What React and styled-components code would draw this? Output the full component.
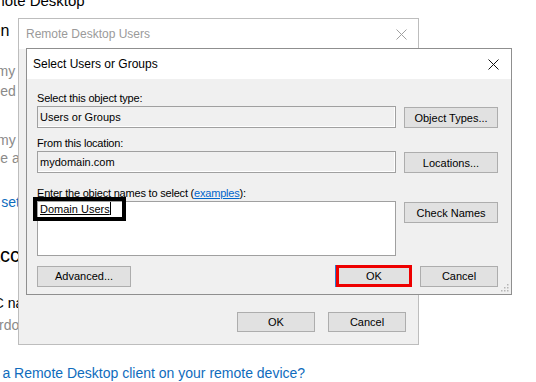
import { createGlobalStyle, styled } from "styled-components"

const GlobalStyle = createGlobalStyle`
  body {
    margin: 0;
    font-family: "Liberation Sans", Arial, sans-serif;
    background: #fff;
  }
`

const tones = { black: "#000", grey: "#8a8a8a", blue: "#0f6cbd" }

const Desktop = styled.div`
  position: relative;
  width: 536px;
  height: 382px;
  overflow: hidden;
  background: #fff;
`

const Page = styled.div`
  display: flex;
  flex-direction: column;
`

const Line = styled.div`
  height: ${(p) => p.$h || 20}px;
  line-height: ${(p) => p.$h || 20}px;
  margin-top: ${(p) => p.$mt}px;
  margin-left: ${(p) => p.$shift}px;
  font-size: ${(p) => p.$size || 14}px;
  color: ${(p) => tones[p.$tone || "black"]};
  white-space: nowrap;
`

const Window = styled.div`
  position: absolute;
  left: ${(p) => p.$x}px;
  top: ${(p) => p.$y}px;
  width: ${(p) => p.$w}px;
  height: ${(p) => p.$hgt}px;
  box-sizing: border-box;
  border: 1px solid ${(p) => (p.$active ? "#8f8f8f" : "#bdbdbd")};
  background: #f0f0f0;
  display: flex;
  flex-direction: column;
`

const TitleBar = styled.div`
  height: 30px;
  flex: none;
  background: #fff;
  display: flex;
  align-items: center;
  justify-content: space-between;
  padding: 0 ${(p) => p.$padR}px 0 ${(p) => p.$padL}px;
`

const Title = styled.span`
  font-size: 12px;
  color: ${(p) => (p.$active ? "#000" : "#9a9a9a")};
`

const CloseIcon = ({ color }) => (
  <svg width="11" height="11" viewBox="0 0 11 11">
    <path d="M0.5 0.5 L10.5 10.5 M10.5 0.5 L0.5 10.5" stroke={color} strokeWidth="1" fill="none" />
  </svg>
)

const BackBody = styled.div`
  flex: 1;
  display: flex;
  flex-direction: column;
  justify-content: flex-end;
  padding: 0 12px 12px;
`

const ButtonRow = styled.div`
  display: flex;
  justify-content: ${(p) => p.$justify || "flex-end"};
  align-items: center;
  gap: ${(p) => p.$gap || 8}px;
`

const Button = styled.button`
  box-sizing: border-box;
  width: ${(p) => p.$w || 94}px;
  height: ${(p) => p.$h || 21}px;
  margin: 0;
  padding: 0;
  border: 1px solid #adadad;
  background: #e1e1e1;
  font-family: "Liberation Sans", Arial, sans-serif;
  font-size: 11px;
  color: #000;
`

const OkButton = styled(Button)`
  border: 3px solid #ee0000;
  box-shadow: -1px 0 0 #2a7bd6;
`

const DialogBody = styled.div`
  flex: 1;
  padding: 12px 12px 0 10px;
  font-size: 11px;
`

const Label = styled.div`
  height: 14px;
  line-height: 14px;
  margin-top: ${(p) => p.$mt || 0}px;
  margin-bottom: 1px;
  letter-spacing: -0.2px;
  color: #000;
`

const Link = styled.span`
  color: #0066cc;
  text-decoration: underline;
`

const Row = styled.div`
  display: grid;
  grid-template-columns: 359px 94px;
  column-gap: 8px;
  align-items: start;

  & > button {
    margin-top: 1px;
  }
`

const TextBox = styled.div`
  position: relative;
  box-sizing: border-box;
  height: ${(p) => p.$h || 22}px;
  border: 1px solid #a0a0a0;
  box-shadow: inset -1px -1px 0 #fff;
  background: ${(p) => (p.$white ? "#fff" : "#f0f0f0")};
  padding: 0 2px;
  line-height: ${(p) => (p.$white ? "14px" : "20px")};
  font-size: 11px;
  color: #000;
`

const Typed = styled.span`
  text-decoration: underline;
`

const Caret = styled.span`
  display: inline-block;
  width: 1px;
  height: 13px;
  background: #000;
  vertical-align: -2px;
  margin-left: 0;
`

const Highlight = styled.div`
  position: absolute;
  left: -5px;
  top: -5px;
  width: 93px;
  height: 24px;
  box-sizing: border-box;
  border: 4px solid #000;
`

const Footer = styled.div`
  display: flex;
  justify-content: space-between;
  align-items: center;
  margin-top: 9px;
  padding-right: 1px;
`

const Grip = styled.svg`
  position: absolute;
  right: 2px;
  bottom: 2px;
`

const pageLines = [
  { text: "Remote Desktop", mt: -9, shift: -27, size: 15 },
  { text: "On", mt: 10, shift: -12, size: 16 },
  { text: "Keep my PC awake for connections when it is", mt: 20, shift: -40, tone: "grey" },
  { text: "plugged in", mt: 0, shift: -34, tone: "grey" },
  { text: "Make my PC discoverable on private networks to", mt: 29, shift: -41, tone: "grey" },
  { text: "enable automatic connection from a remote device", mt: -2, shift: -34, tone: "grey" },
  { text: "Advanced settings", mt: 24, shift: -65, tone: "blue" },
  { text: "User accounts", mt: 30, shift: -59, size: 20, h: 26 },
  { text: "Use this PC name to connect from your remote device:", mt: 25, shift: -70 },
  { text: "rdo-srv01.mydomain.com", mt: 2, shift: -1, tone: "grey" },
  { text: "Don't have a Remote Desktop client on your remote device?", mt: 28, shift: -68, tone: "blue" },
]

const Field = ({ label, value, button, mt }) => (
  <>
    <Label $mt={mt}>{label}</Label>
    <Row>
      <TextBox>{value}</TextBox>
      <Button>{button}</Button>
    </Row>
  </>
)

export default function App() {
  return (
    <>
      <GlobalStyle />
      <Desktop>
        <Page>
          {pageLines.map((l) => (
            <Line key={l.text} $mt={l.mt} $shift={l.shift} $size={l.size} $h={l.h} $tone={l.tone}>
              {l.text}
            </Line>
          ))}
        </Page>

        <Window $x={18} $y={18} $w={401} $hgt={327}>
          <TitleBar $padL={7} $padR={11}>
            <Title>Remote Desktop Users</Title>
            <CloseIcon color="#a0a0a0" />
          </TitleBar>
          <BackBody>
            <ButtonRow $gap={13}>
              <Button $w={78} $h={20}>OK</Button>
              <Button $w={78} $h={20}>Cancel</Button>
            </ButtonRow>
          </BackBody>
        </Window>

        <Window $x={26} $y={48} $w={486} $hgt={247} $active>
          <TitleBar $padL={6} $padR={12}>
            <Title $active>Select Users or Groups</Title>
            <CloseIcon color="#111" />
          </TitleBar>
          <DialogBody>
            <Field label="Select this object type:" value="Users or Groups" button="Object Types..." />
            <Field label="From this location:" value="mydomain.com" button="Locations..." mt={8} />
            <Label $mt={13}>
              Enter the object names to select (<Link>examples</Link>):
            </Label>
            <Row>
              <TextBox $white $h={55}>
                <Typed>Domain Users</Typed>
                <Caret />
                <Highlight />
              </TextBox>
              <Button>Check Names</Button>
            </Row>
            <Footer>
              <Button>Advanced...</Button>
              <ButtonRow>
                <OkButton $w={76} $h={22}>OK</OkButton>
                <Button $w={78}>Cancel</Button>
              </ButtonRow>
            </Footer>
          </DialogBody>
          <Grip width="9" height="9" viewBox="0 0 9 9">
            {[[7, 1], [4, 4], [7, 4], [1, 7], [4, 7], [7, 7]].map(([x, y]) => (
              <rect key={`${x}-${y}`} x={x} y={y} width="1.5" height="1.5" fill="#b5b5b5" />
            ))}
          </Grip>
        </Window>
      </Desktop>
    </>
  )
}
